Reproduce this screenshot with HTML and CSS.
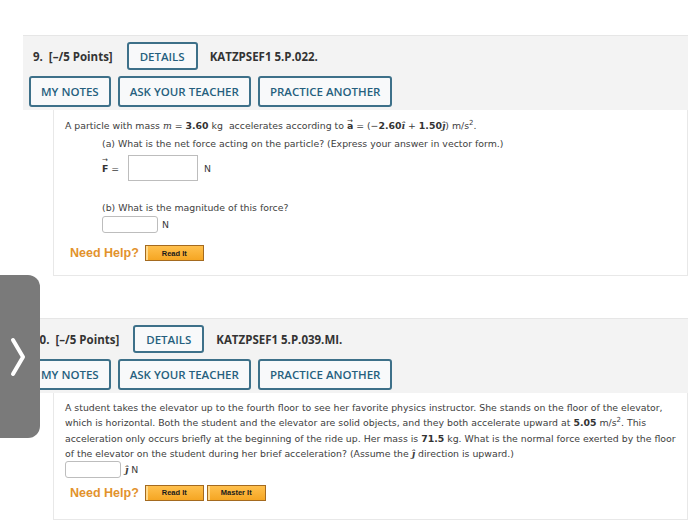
FILE: index.html
```html
<!DOCTYPE html>
<html lang="en">
<head>
    <meta charset="UTF-8">
    <meta name="viewport" content="width=device-width, initial-scale=1.0">
    <title>Assignment</title>
    <link rel="stylesheet" href="styles.css">
</head>
<body>
    <div class="page">
        <!-- Question 9 -->
        <section class="question">
            <div class="qhead">
                <div class="qtitle">
                    <span class="qnum">9.</span>
                    <span class="pts">[&ndash;/5 Points]</span>
                    <button class="btn">DETAILS</button>
                    <span class="code">KATZPSEF1 5.P.022.</span>
                </div>
                <div class="qtools">
                    <button class="btn">MY NOTES</button>
                    <button class="btn">ASK YOUR TEACHER</button>
                    <button class="btn">PRACTICE ANOTHER</button>
                </div>
            </div>
            <div class="qbody q9">
                <p class="line">A particle with mass <i class="var">m</i> = <b>3.60</b> kg &nbsp;accelerates according to <b class="vec">a</b> = (&minus;<b>2.60</b><span class="hat">&icirc;</span> + <b>1.50</b><span class="hat">&#309;</span>) m/s<sup>2</sup>.</p>
                <div class="part parta">
                    <p class="line">(a) What is the net force acting on the particle? (Express your answer in vector form.)</p>
                    <div class="answer">
                        <span class="label"><b class="vec">F</b> =</span>
                        <span class="box tall"></span>
                        <span class="unit">N</span>
                    </div>
                </div>
                <div class="part partb">
                    <p class="line">(b) What is the magnitude of this force?</p>
                    <div class="answer tight">
                        <span class="box"></span>
                        <span class="unit">N</span>
                    </div>
                </div>
                <div class="help">
                    <span class="need">Need Help?</span>
                    <button class="orange">Read It</button>
                </div>
            </div>
        </section>

        <!-- Question 10 -->
        <section class="question">
            <div class="qhead">
                <div class="qtitle">
                    <span class="qnum">10.</span>
                    <span class="pts">[&ndash;/5 Points]</span>
                    <button class="btn">DETAILS</button>
                    <span class="code">KATZPSEF1 5.P.039.MI.</span>
                </div>
                <div class="qtools">
                    <button class="btn">MY NOTES</button>
                    <button class="btn">ASK YOUR TEACHER</button>
                    <button class="btn">PRACTICE ANOTHER</button>
                </div>
            </div>
            <div class="qbody q10">
                <p class="para">A student takes the elevator up to the fourth floor to see her favorite physics instructor. She stands on the floor of the elevator, which is horizontal. Both the student and the elevator are solid objects, and they both accelerate upward at <b>5.05</b> m/s<sup>2</sup>. This acceleration only occurs briefly at the beginning of the ride up. Her mass is <b>71.5</b> kg. What is the normal force exerted by the floor of the elevator on the student during her brief acceleration? (Assume the <span class="hat">&#309;</span> direction is upward.)</p>
                <div class="answer tight first">
                    <span class="box"></span>
                    <span class="unit"><span class="hat">&#309;</span> N</span>
                </div>
                <div class="help near">
                    <span class="need">Need Help?</span>
                    <button class="orange">Read It</button>
                    <button class="orange">Master It</button>
                </div>
            </div>
        </section>
    </div>

    <!-- side drawer handle -->
    <div class="side-tab">
        <svg width="16" height="40" viewBox="0 0 16 40">
            <path d="M3 3 L13 20 L3 37" fill="none" stroke="#fff" stroke-width="4" stroke-linecap="round" stroke-linejoin="round"/>
        </svg>
    </div>
</body>
</html>
```

FILE: styles.css
```css
body {
    margin: 0;
    background-color: #ffffff;
    font-family: "Open Sans", Arial, sans-serif;
    color: #333;
    overflow: hidden;
}
.page {
    padding: 35px 12px 0 23px;
    display: flex;
    flex-direction: column;
    gap: 42px;
}
.qhead {
    background-color: #f3f3f3;
    border-top: 1px solid #e6e6e6;
    padding: 6px 0 3px 6px;
}
.qtitle {
    display: flex;
    align-items: center;
    padding-left: 4px;
    font-size: 11.5px;
    font-weight: 700;
    color: #333;
}
.qnum {
    margin-right: 6px;
}
.pts {
    margin-right: 14px;
}
.code {
    margin-left: 12px;
}
.qtools {
    display: flex;
    gap: 7px;
    margin-top: 6px;
}
.btn {
    font-family: "Open Sans", Arial, sans-serif;
    font-size: 11.5px;
    font-weight: 600;
    color: #265f7e;
    background-color: #f8f9fa;
    border: 2px solid #3d7089;
    border-radius: 3px;
    padding: 0 10px;
    height: 31px;
}
.qtitle .btn {
    height: 28px;
    padding: 0 11px;
}
.qbody {
    margin-left: 30px;
    background-color: #fff;
    border: 1px solid #e8e8e8;
    border-top: none;
    padding: 8px 8px 0 11px;
    font-family: "DejaVu Sans", Verdana, sans-serif;
    font-size: 9.35px;
    color: #3d3d3d;
}
.q9 {
    height: 157px;
}
.q10 {
    height: 119px;
    padding-top: 7px;
}
.line {
    margin: 0;
    line-height: 16px;
}
.para {
    margin: 0;
    line-height: 15.4px;
}
b {
    font-weight: 700;
    color: #333;
}
sup {
    font-size: 7px;
    line-height: 0;
}
.var {
    font-family: "DejaVu Serif", serif;
    font-style: italic;
}
.vec {
    position: relative;
    font-weight: 700;
}
.vec::before {
    content: "\2192";
    position: absolute;
    left: 0;
    top: -7px;
    font-size: 7px;
    font-weight: 400;
}
.hat {
    font-family: "DejaVu Serif", serif;
    font-style: italic;
    font-weight: 700;
}
.part {
    margin-left: 37px;
}
.parta {
    margin-top: 2px;
}
.answer {
    display: flex;
    align-items: center;
    gap: 6px;
    margin-top: 3px;
}
.label {
    width: 20px;
}
.box {
    width: 54px;
    height: 15px;
    border: 1px solid #bdbdbd;
    border-radius: 3px;
    background: #fff;
}
.box.tall {
    width: 68px;
    height: 24px;
    border-radius: 0;
}
.tight {
    gap: 4px;
    margin-top: 0;
}
.partb {
    margin-top: 19px;
}
.first {
    margin-top: -1px;
}
.help {
    display: flex;
    align-items: center;
    gap: 3px;
    margin: 12px 0 0 5px;
}
.help.near {
    margin-top: 7px;
}
.need {
    font-family: "Liberation Sans", Arial, sans-serif;
    font-size: 12.5px;
    font-weight: 700;
    color: #e2922c;
    margin-right: 3px;
}
.orange {
    font-family: "Liberation Sans", Arial, sans-serif;
    font-size: 7.5px;
    font-weight: 700;
    color: #1a1a1a;
    width: 59px;
    height: 16px;
    padding: 0;
    border: 1px solid #a46a1f;
    background: linear-gradient(#ffc04d, #f5a623);
    box-shadow: inset 2px 0 0 #ffd98a;
}
.side-tab {
    position: absolute;
    left: -12px;
    top: 275px;
    width: 52px;
    height: 163px;
    border-radius: 12px;
    background-color: #7a7a7a;
    display: flex;
    align-items: center;
    justify-content: flex-end;
    padding-right: 14px;
    box-sizing: border-box;
}
```
